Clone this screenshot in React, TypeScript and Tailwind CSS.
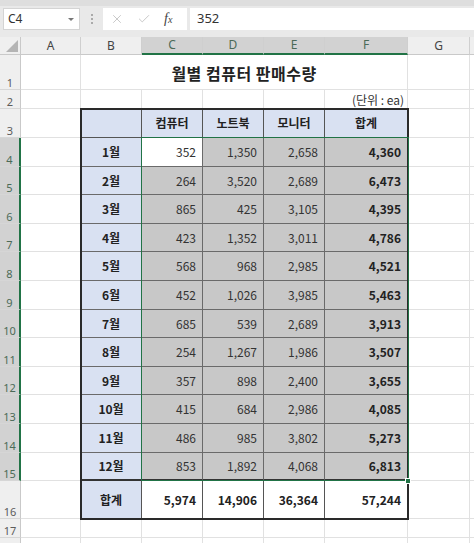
import { X, Check } from "lucide-react";

type RowData = [string, string, string, string, string];

const data: RowData[] = [
  ["1월", "352", "1,350", "2,658", "4,360"],
  ["2월", "264", "3,520", "2,689", "6,473"],
  ["3월", "865", "425", "3,105", "4,395"],
  ["4월", "423", "1,352", "3,011", "4,786"],
  ["5월", "568", "968", "2,985", "4,521"],
  ["6월", "452", "1,026", "3,985", "5,463"],
  ["7월", "685", "539", "2,689", "3,913"],
  ["8월", "254", "1,267", "1,986", "3,507"],
  ["9월", "357", "898", "2,400", "3,655"],
  ["10월", "415", "684", "2,986", "4,085"],
  ["11월", "486", "985", "3,802", "5,273"],
  ["12월", "853", "1,892", "4,068", "6,813"],
];

const rowHeights = [
  "h-[29px]", "h-[28px]", "h-[29px]", "h-[28px]", "h-[29px]", "h-[29px]",
  "h-[28px]", "h-[29px]", "h-[28px]", "h-[29px]", "h-[29px]", "h-[28px]",
];

const grid = "border-r border-b border-[#e1e1e1]";

function RowHead({ n, sel }: { n?: number; sel?: boolean }) {
  return (
    <div
      className={`w-[21px] shrink-0 flex items-end justify-center pb-[1px] text-[11px] leading-none font-['Noto_Sans',sans-serif] border-b border-b-[#d6d6d6] ${
        sel
          ? "bg-[#d2d2d2] border-r-2 border-r-[#217346] text-[#4b6a57]"
          : "bg-[#efefef] border-r border-r-[#c9c9c9] text-[#5c5c5c]"
      }`}
    >
      {n}
    </div>
  );
}

function Blank({ w }: { w: string }) {
  return <div className={`${w} shrink-0 ${grid}`} />;
}

function Row({ h, n, sel, children }: { h: string; n?: number; sel?: boolean; children?: React.ReactNode }) {
  return (
    <div className={`flex ${h}`}>
      <RowHead n={n} sel={sel} />
      {children}
      <div className="flex-1 border-b border-[#e1e1e1]" />
    </div>
  );
}

function ColHead({ w, label, sel }: { w: string; label: string; sel?: boolean }) {
  return (
    <div
      className={`${w} shrink-0 flex items-center justify-center text-[12px] font-['Noto_Sans',sans-serif] border-r border-r-[#cfcfcf] ${
        sel
          ? "bg-[#d2d2d2] border-b-2 border-b-[#217346] text-[#4b6a57]"
          : "bg-[#efefef] border-b border-b-[#c9c9c9] text-[#444]"
      }`}
    >
      {label}
    </div>
  );
}

export default function App() {
  return (
    <div className="w-[474px] h-[543px] overflow-hidden bg-white font-['Noto_Sans_CJK_KR',sans-serif] text-[#222]">
      {/* formula bar */}
      <div className="h-[37px] bg-[#e9e9e9] border-t-[6px] border-[#dedede] flex items-start pt-[2px] pl-[3px]">
        <div className="w-[77px] h-[22px] bg-white border border-[#d4d4d4] flex items-center justify-between pl-[4px] pr-[5px]">
          <span className="text-[12px] text-[#333] font-['Noto_Sans',sans-serif]">C4</span>
          <span className="w-0 h-0 border-l-[3px] border-r-[3px] border-t-[3px] border-l-transparent border-r-transparent border-t-[#777]" />
        </div>
        <div className="w-[23px] h-[22px] flex flex-col items-center justify-center gap-[2px]">
          <span className="w-[2px] h-[2px] bg-[#aaa]" />
          <span className="w-[2px] h-[2px] bg-[#aaa]" />
          <span className="w-[2px] h-[2px] bg-[#aaa]" />
        </div>
        <div className="w-[84px] h-[22px] bg-white flex items-center">
          <X size={14} strokeWidth={1.3} className="ml-[7px] text-[#b8b8b8]" />
          <Check size={14} strokeWidth={1.3} className="ml-[13px] text-[#b8b8b8]" />
          <span className="ml-[13px] italic font-['Liberation_Serif',serif] text-[14px] text-[#444] leading-none">
            f<span className="text-[10px]">x</span>
          </span>
        </div>
        <div className="flex-1 h-[22px] ml-[3px] bg-white flex items-center pl-[7px]">
          <span className="text-[13px] text-[#333] font-['Noto_Sans',sans-serif]">352</span>
        </div>
      </div>

      {/* sheet */}
      <div className="relative">
        <div className="flex h-[18px]">
          <div className="w-[21px] shrink-0 bg-[#efefef] border-r border-b border-[#c9c9c9] flex items-end justify-end p-[2px]">
            <svg width="12" height="12" viewBox="0 0 12 12">
              <polygon points="12,0 12,12 0,12" fill="#b4b4b4" />
            </svg>
          </div>
          <ColHead w="w-[60px]" label="A" />
          <ColHead w="w-[61px]" label="B" />
          <ColHead w="w-[61px]" label="C" sel />
          <ColHead w="w-[61px]" label="D" sel />
          <ColHead w="w-[61px]" label="E" sel />
          <ColHead w="w-[83px]" label="F" sel />
          <ColHead w="w-[62px]" label="G" />
          <div className="flex-1 bg-[#efefef] border-b border-[#c9c9c9]" />
        </div>

        <Row h="h-[35px]" n={1}>
          <Blank w="w-[60px]" />
          <div className="w-[327px] shrink-0 flex items-center justify-center border-b border-[#e1e1e1] border-r pt-[2px]">
            <span className="text-[16px] font-bold tracking-[0.5px]">월별 컴퓨터 판매수량</span>
          </div>
          <Blank w="w-[62px]" />
        </Row>

        <Row h="h-[19px]" n={2}>
          <Blank w="w-[60px]" />
          <Blank w="w-[61px]" />
          <Blank w="w-[61px]" />
          <Blank w="w-[61px]" />
          <Blank w="w-[61px]" />
          <div className={`w-[83px] shrink-0 ${grid} flex items-end justify-end pr-[3px] pb-[2px]`}>
            <span className="text-[12px] leading-none text-[#333]">(단위 : ea)</span>
          </div>
          <Blank w="w-[62px]" />
        </Row>

        <Row h="h-[29px]" n={3}>
          <Blank w="w-[60px]" />
          <div className="w-[61px] shrink-0 bg-[#d9e1f2] border-r border-b border-[#555]" />
          {["컴퓨터", "노트북", "모니터"].map((t) => (
            <div key={t} className="w-[61px] shrink-0 bg-[#d9e1f2] border-r border-b border-[#555] flex items-center justify-center text-[12px] font-bold">
              {t}
            </div>
          ))}
          <div className="w-[83px] shrink-0 bg-[#d9e1f2] border-r border-b border-[#555] flex items-center justify-center text-[12px] font-bold">
            합계
          </div>
          <Blank w="w-[62px]" />
        </Row>

        {data.map((r, i) => {
          const last = i === data.length - 1;
          const bb = last ? "border-b-2 border-b-[#333]" : "border-b border-b-[#6a6a6a]";
          return (
            <Row key={r[0]} h={rowHeights[i]} n={i + 4} sel>
              <Blank w="w-[60px]" />
              <div className={`w-[61px] shrink-0 bg-[#d9e1f2] border-r border-r-[#555] ${bb} flex items-center justify-center text-[12px] font-bold`}>
                {r[0]}
              </div>
              {[r[1], r[2], r[3]].map((v, j) => (
                <div
                  key={j}
                  className={`w-[61px] shrink-0 ${i === 0 && j === 0 ? "bg-white" : "bg-[#c8c8c8]"} border-r border-r-[#6a6a6a] ${bb} flex items-center justify-end pr-[6px] text-[12px] text-[#333]`}
                >
                  {v}
                </div>
              ))}
              <div className={`w-[83px] shrink-0 bg-[#c8c8c8] border-r border-r-[#6a6a6a] ${bb} flex items-center justify-end pr-[6px] text-[12px] font-bold`}>
                {r[4]}
              </div>
              <Blank w="w-[62px]" />
            </Row>
          );
        })}

        <Row h="h-[38px]" n={16}>
          <Blank w="w-[60px]" />
          <div className="w-[61px] shrink-0 bg-[#d9e1f2] border-r border-b border-[#555] flex items-center justify-center text-[12px] font-bold">
            합계
          </div>
          {["5,974", "14,906", "36,364"].map((v) => (
            <div key={v} className="w-[61px] shrink-0 bg-white border-r border-b border-[#555] flex items-center justify-end pr-[6px] text-[12px] font-bold">
              {v}
            </div>
          ))}
          <div className="w-[83px] shrink-0 bg-white border-r border-b border-[#555] flex items-center justify-end pr-[6px] text-[12px] font-bold">
            57,244
          </div>
          <Blank w="w-[62px]" />
        </Row>

        <Row h="h-[19px]" n={17}>
          <Blank w="w-[60px]" />
          <Blank w="w-[61px]" />
          <Blank w="w-[61px]" />
          <Blank w="w-[61px]" />
          <Blank w="w-[61px]" />
          <Blank w="w-[83px]" />
          <Blank w="w-[62px]" />
        </Row>
        <Row h="h-[19px]">
          <Blank w="w-[60px]" />
          <Blank w="w-[61px]" />
          <Blank w="w-[61px]" />
          <Blank w="w-[61px]" />
          <Blank w="w-[61px]" />
          <Blank w="w-[83px]" />
          <Blank w="w-[62px]" />
        </Row>

        {/* table outer border */}
        <div className="absolute left-[80px] top-[71px] w-[329px] h-[412px] border-2 border-[#2a2a2a] pointer-events-none" />
        {/* selection */}
        <div className="absolute left-[141px] top-[100px] w-[268px] h-[344px] border-[1.5px] border-[#217346] pointer-events-none" />
        <div className="absolute left-[405px] top-[441px] w-[6px] h-[6px] bg-[#217346] border border-white" />
      </div>
    </div>
  );
}
